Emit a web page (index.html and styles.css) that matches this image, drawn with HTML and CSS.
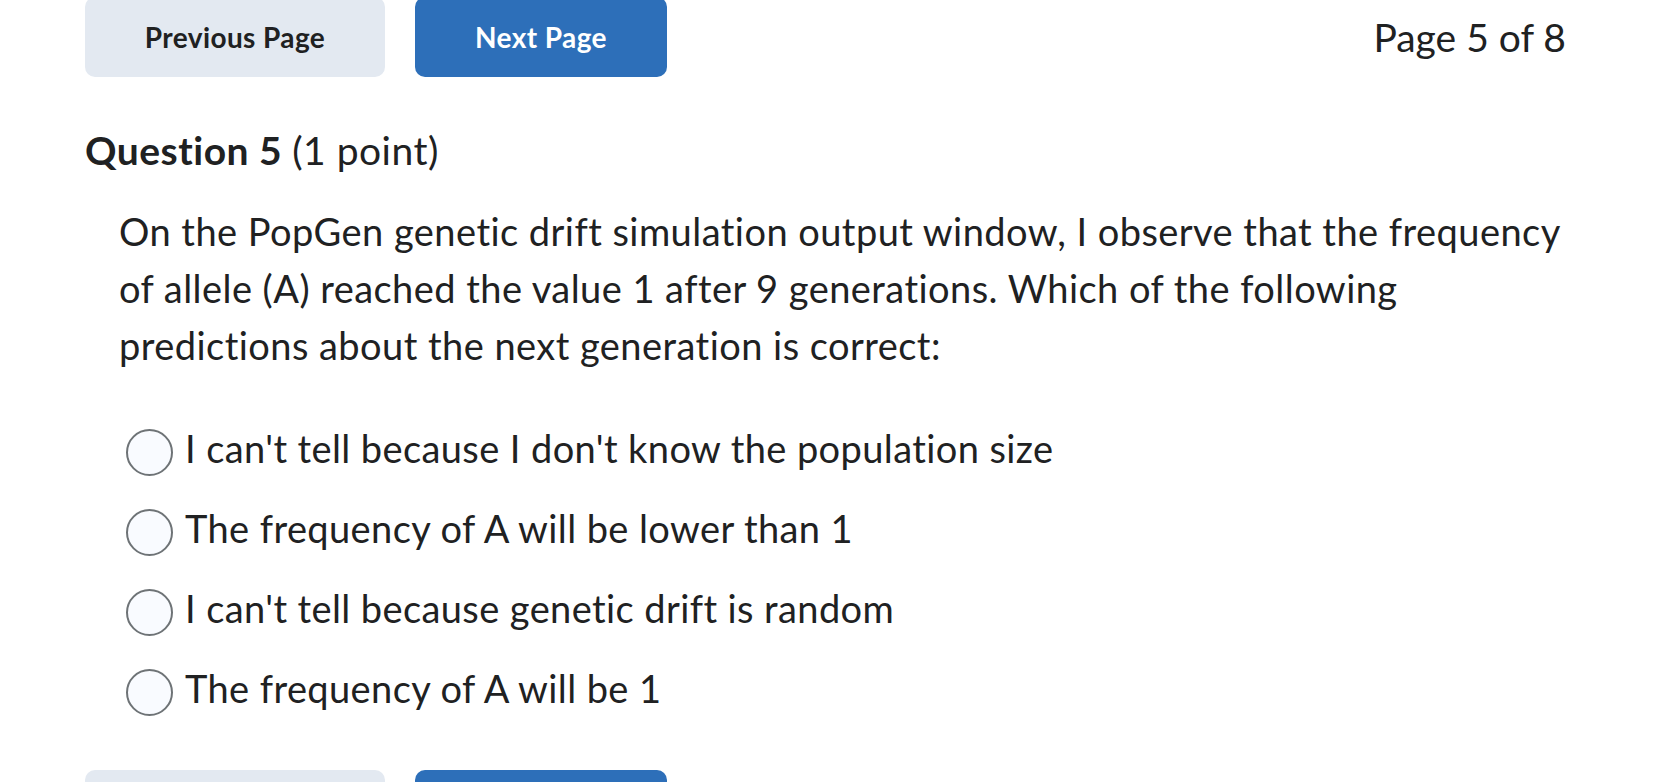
FILE: index.html
```html
<!DOCTYPE html>
<html lang="en">
<head>
    <meta charset="UTF-8">
    <meta name="viewport" content="width=device-width, initial-scale=1.0">
    <title>Quiz - Page 5 of 8</title>
    <link rel="stylesheet" href="styles.css">
</head>
<body>
    <div class="quiz">
        <nav class="page-nav">
            <button class="btn btn-prev">Previous Page</button>
            <button class="btn btn-next">Next Page</button>
            <span class="page-count">Page 5 of 8</span>
        </nav>

        <section class="question">
            <h2 class="question-title">Question 5 <span class="points">(1 point)</span></h2>
            <p class="question-text">On the PopGen genetic drift simulation output window, I observe that the frequency of allele (A) reached the value 1 after 9 generations. Which of the following predictions about the next generation is correct:</p>

            <div class="options">
                <label class="option">
                    <input type="radio" name="q5">
                    <span>I can't tell because I don't know the population size</span>
                </label>
                <label class="option">
                    <input type="radio" name="q5">
                    <span>The frequency of A will be lower than 1</span>
                </label>
                <label class="option">
                    <input type="radio" name="q5">
                    <span>I can't tell because genetic drift is random</span>
                </label>
                <label class="option">
                    <input type="radio" name="q5">
                    <span>The frequency of A will be 1</span>
                </label>
            </div>
        </section>

        <nav class="page-nav page-nav-bottom">
            <button class="btn btn-prev">Previous Page</button>
            <button class="btn btn-next">Next Page</button>
        </nav>
    </div>
</body>
</html>
```

FILE: styles.css
```css
* {
    margin: 0;
    padding: 0;
    box-sizing: border-box;
}

:root {
    --text: #202122;
    --primary: #2d6fb9;
    --secondary: #e3e9f1;
    --radio-border: #6e7376;
    --radio-fill: #f9fbff;
}

body {
    font-family: Lato, 'Noto Sans', sans-serif;
    font-variant-ligatures: none;
    color: var(--text);
    background-color: white;
    overflow: hidden;
}

.quiz {
    padding: 0 110px 0 85px;
}

.page-nav {
    display: flex;
    align-items: center;
    gap: 30px;
    height: 80px;
    margin-top: -3px;
}

.btn {
    height: 80px;
    border: none;
    border-radius: 10px;
    font-family: inherit;
    font-variant-ligatures: none;
    font-size: 28px;
    font-weight: bold;
    letter-spacing: 0.4px;
    cursor: pointer;
}

.btn-prev {
    width: 300px;
    background-color: var(--secondary);
    color: var(--text);
}

.btn-next {
    width: 252px;
    background-color: var(--primary);
    color: white;
}

.page-count {
    margin-left: auto;
    font-size: 39px;
    line-height: 1.2;
}

.question-title {
    margin-top: 50px;
    font-size: 39px;
    line-height: 1.2;
    font-weight: bold;
    letter-spacing: 0.5px;
}

.points {
    font-weight: normal;
}

.question-text {
    margin: 29px 0 0 34px;
    font-size: 38px;
    line-height: 57px;
    letter-spacing: 0.45px;
}

.options {
    display: flex;
    flex-direction: column;
    gap: 23px;
    margin: 46px 0 0 41px;
}

.option {
    display: flex;
    align-items: flex-start;
    gap: 12px;
    font-size: 38px;
    line-height: 57px;
    letter-spacing: 0.4px;
    cursor: pointer;
}

.option input {
    appearance: none;
    flex-shrink: 0;
    width: 47px;
    height: 47px;
    margin-top: 9px;
    border: 2px solid var(--radio-border);
    border-radius: 50%;
    background-color: var(--radio-fill);
}

.page-nav-bottom {
    margin-top: 53px;
}
```
